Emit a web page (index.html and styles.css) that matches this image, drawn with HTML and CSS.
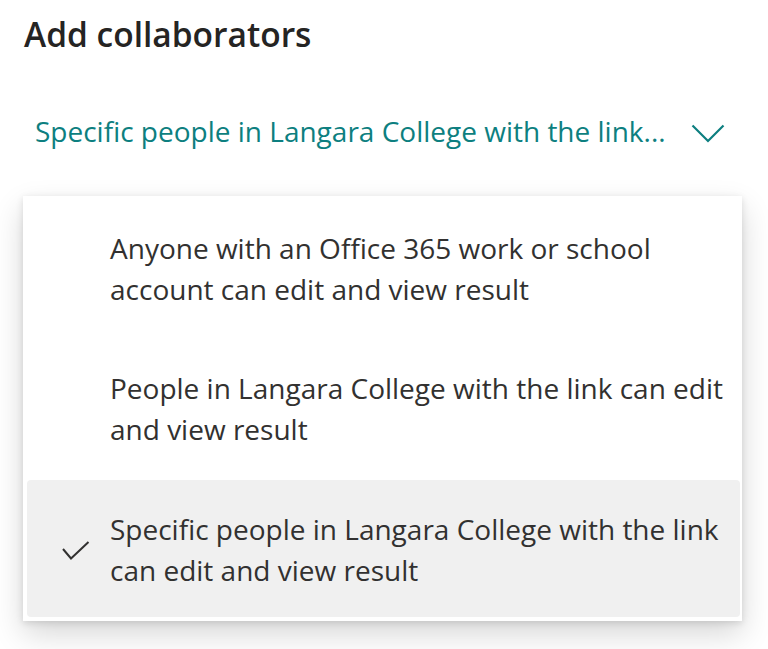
FILE: index.html
```html
<!DOCTYPE html>
<html lang="en">
<head>
<meta charset="utf-8">
<title>Add collaborators</title>
<link rel="stylesheet" href="styles.css">
</head>
<body>
<div class="panel">
  <h1 class="title">Add collaborators</h1>
  <div class="picker">
    <span class="picker-text">Specific people in Langara College with the link...</span>
    <svg class="chevron" width="34" height="19" viewBox="0 0 34 19" aria-hidden="true">
      <polyline points="1.5,1.5 17,17 32.5,1.5" fill="none" stroke="#0d7f80" stroke-width="2.2"/>
    </svg>
  </div>
  <ul class="menu">
    <li class="item">
      <span class="check"></span>
      <span class="label">Anyone with an Office 365 work or school account can edit and view result</span>
    </li>
    <li class="item">
      <span class="check"></span>
      <span class="label">People in Langara College with the link can edit and view result</span>
    </li>
    <li class="item selected">
      <span class="check">
        <svg width="28" height="20" viewBox="0 0 28 20" aria-hidden="true">
          <polyline points="1,8 9,17.5 26.5,1" fill="none" stroke="#323130" stroke-width="2"/>
        </svg>
      </span>
      <span class="label">Specific people in Langara College with the link can edit and view result</span>
    </li>
  </ul>
</div>
</body>
</html>
```
FILE: styles.css
```css
html, body {
  margin: 0;
  padding: 0;
  background: #ffffff;
}
body {
  font-family: "Open Sans", "Noto Sans", sans-serif;
  color: #323130;
  min-height: 649px;
}
.panel {
  padding-top: 12px;
}
.title {
  margin: 0 0 0 24px;
  font-size: 33.5px;
  line-height: 44px;
  font-weight: 600;
  color: #252423;
}
.picker {
  margin-top: 55px;
  padding: 0 43px 0 35px;
  display: flex;
  align-items: center;
  justify-content: space-between;
  height: 40px;
}
.picker-text {
  font-size: 28px;
  line-height: 40px;
  color: #0d7f80;
  white-space: nowrap;
}
.chevron {
  display: block;
  margin-top: 5px;
}
.menu {
  list-style: none;
  margin: 45px 0 0 23px;
  width: 719px;
  box-sizing: border-box;
  padding: 4px 2px 4px 4px;
  background: #ffffff;
  box-shadow: 0 13px 29px rgba(0, 0, 0, 0.16), 0 2px 7px rgba(0, 0, 0, 0.12);
  display: flex;
  flex-direction: column;
  gap: 4px;
}
.item {
  display: grid;
  grid-template-columns: 83px 1fr;
  align-items: center;
  height: 136px;
  box-sizing: border-box;
  padding: 2px 10px 0 0;
  border-radius: 4px;
}
.item.selected {
  background: #f0f0f0;
  height: 137px;
}
.check {
  display: flex;
  justify-content: flex-start;
  padding-left: 35px;
}
.check svg {
  display: block;
  margin-top: 2px;
}
.label {
  font-size: 28px;
  line-height: 41px;
  color: #323130;
}
```
